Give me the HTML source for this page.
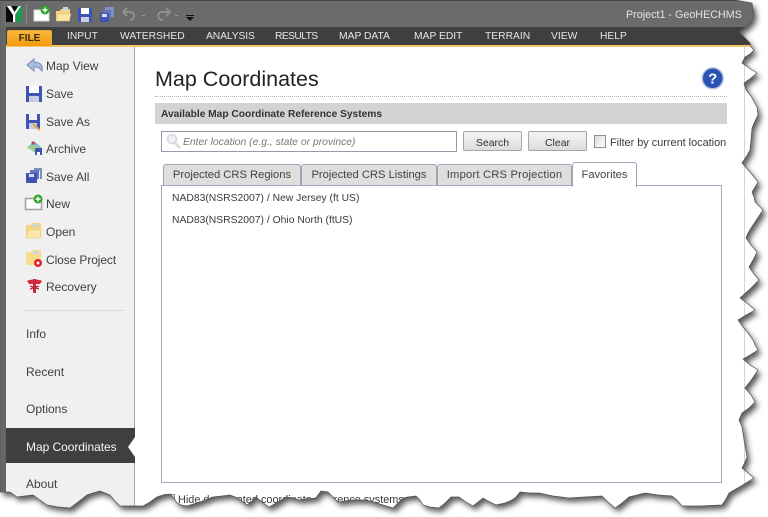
<!DOCTYPE html>
<html><head><meta charset="utf-8">
<style>
html,body{margin:0;padding:0;width:768px;height:517px;overflow:hidden;background:#fff}
*{box-sizing:border-box}
body{font-family:"Liberation Sans",sans-serif;font-size:11.5px;color:#3a3a3a;position:relative}
.t{position:absolute;white-space:nowrap;line-height:14px}
.b{position:absolute}
svg{position:absolute;overflow:visible}
#page{position:absolute;left:0;top:0;width:768px;height:517px;background:#fff;clip-path:url(#cp)}
.m{color:#e6e6e6;top:30px;font-size:10.3px}
.s{left:46px;font-size:12px;color:#404040}
.tab{position:absolute;top:164px;height:21px;background:#dedede;border:1.5px solid #a5a2b8;border-bottom:none;border-radius:3px 3px 0 0;text-align:center;line-height:20px;font-size:11.2px;color:#444;white-space:nowrap}
.btn{position:absolute;top:131px;width:59px;height:20px;border:1px solid #a5a5a5;border-radius:2px;background:linear-gradient(#f5f5f5,#dcdcdc);text-align:center;line-height:21px;font-size:10.5px;color:#333}
</style></head><body>
<svg width="768" height="517" style="left:0;top:0">
<defs>
<filter id="bl" x="-5%" y="-5%" width="110%" height="110%"><feGaussianBlur stdDeviation="3"/></filter>
<clipPath id="cp"><path id="edge" d="M0 0L735 0L752 3L753 9L754 15L752 20L749 24L744 28L739 32L744 37L750 43L751 47L754 50L750 54L745 57L742 63L749 68L757 73L751 78L744 83L746 90L751 96L754 102L757 107L758 115L755 121L752 128L751 140L750 150L746 157L742 163L750 172L758 182L755 187L752 192L754 197L755 202L759 206L763 210L757 219L751 228L748 233L746 238L751 245L757 252L753 260L749 267L754 274L759 280L750 289L740 298L748 304L755 310L746 315L738 320L743 327L748 333L753 340L755 345L758 350L750 355L743 359L750 365L758 370L752 379L745 388L751 395L755 402L749 408L742 413L739 420L742 427L744 440L747 457L745 462L742 468L748 473L754 478L741 486L729 493L726 499L722 505L700 506L682 506L677 500L672 496L658 495L645 493L637 495L629 497L622 503L615 508L608 502L602 496L585 497L569 498L553 496L539 493L530 493L520 492L516 497L512 500L505 503L496 505L490 502L483 498L478 502L473 506L466 502L459 497L451 497L445 503L439 508L430 507L423 505L420 500L416 496L408 497L403 498L398 503L393 508L380 504L366 500L352 500L338 502L333 497L328 492L321 491L318 495L316 498L306 499L299 500L292 498L286 497L278 502L269 507L262 502L256 497L252 501L247 505L238 498L230 495L222 496L213 497L200 502L187 506L181 505L177 503L174 498L170 494L163 495L157 497L150 502L143 506L130 506L120 506L115 501L110 495L105 493L100 491L93 493L87 495L78 502L70 508L58 507L47 505L40 500L33 495L25 496L17 497L13 494L10 492L0 492Z"/></clipPath>
</defs>
<use href="#edge" fill="#2a2a2a" opacity=".78" filter="url(#bl)" transform="translate(3,4)"/>
</svg>
<div id="page">
 <!-- chrome -->
 <div class="b" style="left:0;top:0;width:768px;height:27px;background:#6b6b6b;border-top:1px solid #3d3d3d"></div>
 <div class="b" style="left:0;top:27px;width:768px;height:18px;background:#3f3f3f"></div>
 <div class="b" style="left:0;top:45px;width:768px;height:2px;background:#f3c669"></div>
 <div class="b" style="left:0;top:27px;width:6px;height:490px;background:#666"></div>
 <div class="b" style="left:6px;top:47px;width:129px;height:470px;background:#f0f0f0;border-right:1.5px solid #a5a2b8"></div>
 <div class="b" style="left:744px;top:47px;width:1px;height:470px;background:#d4d4d4"></div>
 <!-- FILE tab -->
 <div class="b" style="left:7px;top:30px;width:45px;height:16px;background:linear-gradient(#f9b73a,#f39a0c);border-radius:2px 2px 0 0;border:1px solid #e9a93a;border-bottom:none;text-align:center;font-size:10px;font-weight:bold;line-height:15px;color:#3a2a10">FILE</div>
 <!-- menu -->
 <span class="t m" style="left:67px">INPUT</span>
 <span class="t m" style="left:120px">WATERSHED</span>
 <span class="t m" style="left:206px;letter-spacing:-.1px">ANALYSIS</span>
 <span class="t m" style="left:275px;letter-spacing:-.6px">RESULTS</span>
 <span class="t m" style="left:339px">MAP DATA</span>
 <span class="t m" style="left:414px">MAP EDIT</span>
 <span class="t m" style="left:485px">TERRAIN</span>
 <span class="t m" style="left:551px">VIEW</span>
 <span class="t m" style="left:600px">HELP</span>
 <span class="t" style="left:626px;top:8px;font-size:10.75px;color:#e2e2e2">Project1 - GeoHECHMS</span>
 <!-- quick access -->
 <svg width="768" height="27" style="left:0;top:0">
  <rect x="6" y="6" width="16" height="16" fill="#0a0a0a"/>
  <path d="M6 6L10 6L14 13L18 6L22 6L22 22L16 22L16 15Z" fill="#1c9a4d"/>
  <path d="M7 6L11 6L14.5 12L19 6L21 6L15.5 14L15.5 22L13 22L13 15Z" fill="#fff"/>
  <rect x="26" y="5" width="1" height="18" fill="#8a8a8a"/>
  <rect x="34" y="10" width="15" height="11" fill="#fff" stroke="#d8d8d8"/>
  <circle cx="45" cy="10" r="4.5" fill="#2aa52a"/><path d="M42.5 10h5M45 7.5v5" stroke="#fff" stroke-width="1.4"/>
  <path d="M56 21V11h4l1-2h9v12Z" fill="#f3d684"/><path d="M56 21l2-7h13l-2 7Z" fill="#fbe8a8" stroke="#d9b85a" stroke-width=".6"/>
  <rect x="63" y="7" width="5" height="3" fill="#bcd7ea"/>
  <path d="M78 8h14v14H78Z" fill="#3d55b4"/><rect x="81" y="8" width="8" height="6" fill="#fff"/><rect x="81" y="17" width="8" height="5" fill="#c9cfe0"/>
  <path d="M105 7h9v10h-3v-7h-6Z" fill="#7f8fc4"/><path d="M103 10h8v8h-8Z" fill="#6176bd"/><path d="M100 13h9v9h-9Z" fill="#3d55b4"/><rect x="102" y="14" width="5" height="3" fill="#dde"/>
  <path d="M130 20c5 0 6-8 0-8h-7M127 8l-4 4 4 4" fill="none" stroke="#8f8f8f" stroke-width="2"/>
  <path d="M163 20c-6 0-7-8 0-8h6M166 8l4 4-4 4" fill="none" stroke="#8f8f8f" stroke-width="2"/>
  <rect x="142" y="15" width="3" height="1" fill="#9a9a9a"/><rect x="175" y="15" width="3" height="1" fill="#9a9a9a"/>
  <rect x="186" y="15" width="8" height="1" fill="#111"/><path d="M186 17h8l-4 4Z" fill="#111"/>
 </svg>
 <!-- sidebar icons -->
 <svg width="135" height="300" style="left:0;top:0">
  <path d="M27 65l7-6v3c6 0 9 3 8 9-2-3-4-4-8-4v4Z" fill="#a8bcdc" stroke="#7b8fb8"/>
  <path d="M26 86h16v16H26Z" fill="#3d55b4"/><rect x="29" y="86" width="10" height="7" fill="#fff"/><rect x="29" y="96" width="10" height="6" fill="#c9cfe0"/>
  <path d="M26 114h14v15H26Z" fill="#3d55b4"/><rect x="29" y="114" width="8" height="6" fill="#f1f1f1"/><rect x="29" y="123" width="8" height="6" fill="#c9cfe0"/><path d="M33 124l7 6" stroke="#d9a13a" stroke-width="2"/>
  <path d="M27 148l7-7 8 7-8 3Z" fill="#7fb4e0"/><path d="M26 147l8-2 8 3-8 4Z" fill="#9fd08a"/><circle cx="33" cy="143" r="1.5" fill="#d33"/><rect x="35" y="148" width="7" height="7" fill="#3d55b4"/><rect x="37" y="152" width="3" height="3" fill="#fff"/>
  <path d="M34 168h8v11h-2v-8h-6Z" fill="#7f8fc4"/><path d="M30 170h9v9h-9Z" fill="#6176bd"/><path d="M26 173h11v10H26Z" fill="#3d55b4"/><rect x="29" y="174" width="5" height="3" fill="#dde"/>
  <rect x="25.500" y="198.500" width="16" height="11" fill="#fff" stroke="#a0a0a0" stroke-width="1.500"/>
  <circle cx="38" cy="199" r="4.500" fill="#2aa52a"/><path d="M35.500 199h5M38 196.500v5" stroke="#fff" stroke-width="1.400"/>
  <path d="M26 238v-13h5l1-2h9v15Z" fill="#f3d684"/><path d="M26 238l2-8h13l-1 8Z" fill="#fbe8a8" stroke="#e3c56d" stroke-width=".6"/><rect x="33" y="224" width="5" height="3" fill="#bcd7ea"/>
  <path d="M26 265v-13h5l1-2h9v15Z" fill="#f6dc8c"/><rect x="33" y="251" width="5" height="3" fill="#bcd7ea"/>
  <circle cx="38" cy="263" r="4" fill="#e61f2d"/><circle cx="38" cy="263" r="1.500" fill="#fff"/>
  <path d="M27 281c3-2 12-2 15 0l-2 3h-11Z" fill="#d42a3c"/><path d="M33 279h3v14h-3Z" fill="#c8283a"/><path d="M30 286l9 3M39 286l-9 3" stroke="#b8283a" stroke-width="1.400"/>
 </svg>
 <span class="t s" style="top:59px">Map View</span>
 <span class="t s" style="top:87px">Save</span>
 <span class="t s" style="top:115px">Save As</span>
 <span class="t s" style="top:142px">Archive</span>
 <span class="t s" style="top:170px">Save All</span>
 <span class="t s" style="top:197px">New</span>
 <span class="t s" style="top:225px">Open</span>
 <span class="t s" style="top:253px;letter-spacing:-.1px">Close Project</span>
 <span class="t s" style="top:280px">Recovery</span>
 <div class="b" style="left:24px;top:310px;width:101px;height:1px;background:#dcdcdc"></div>
 <span class="t s" style="left:26px;top:327px">Info</span>
 <span class="t s" style="left:26px;top:365px">Recent</span>
 <span class="t s" style="left:26px;top:402px">Options</span>
 <div class="b" style="left:6px;top:428px;width:129px;height:35px;background:#3f3f3f"></div>
 <svg width="10" height="20" style="left:127px;top:437px"><path d="M8 0L1 10L8 20Z" fill="#fff"/></svg>
 <span class="t s" style="left:26px;top:440px;color:#f4f4f4;letter-spacing:-.05px">Map Coordinates</span>
 <span class="t s" style="left:26px;top:477px">About</span>
 <!-- main -->
 <span class="t" style="left:155px;top:66px;font-size:21.5px;line-height:27px;color:#222">Map Coordinates</span>
 <svg width="26" height="26" style="left:700px;top:65px">
  <circle cx="12.700" cy="13.300" r="10.500" fill="#2a53b4" stroke="#b9c3dc" stroke-width="1.500"/>
  <text x="12.700" y="18.500" font-family="Liberation Sans" font-size="15" font-weight="bold" fill="#fff" text-anchor="middle">?</text>
 </svg>
 <div class="b" style="left:155px;top:96px;width:572px;height:0;border-top:1px dotted #b4b4b4"></div>
 <div class="b" style="left:155px;top:103px;width:572px;height:21px;background:#d3d3d3"></div>
 <span class="t" style="left:161px;top:108px;font-size:10.2px;font-weight:bold;color:#333">Available Map Coordinate Reference Systems</span>
 <div class="b" style="left:161px;top:131px;width:296px;height:21px;border:1px solid #9a97ad;background:#fff"></div>
 <svg width="20" height="20" style="left:164px;top:132px"><circle cx="8" cy="7" r="4.500" fill="#eef2f6" stroke="#d3d7dc" stroke-width="1.500"/><path d="M11 11l5 5" stroke="#d8d8d8" stroke-width="2.500"/></svg>
 <span class="t" style="left:183px;top:136px;font-size:10.35px;font-style:italic;color:#777">Enter location (e.g., state or province)</span>
 <div class="btn" style="left:463px;line-height:22px">Search</div>
 <div class="btn" style="left:528px;line-height:22px">Clear</div>
 <div class="b" style="left:594px;top:135px;width:12px;height:13px;border:1px solid #8f8f8f;background:linear-gradient(135deg,#dcdcdc,#fff)"></div>
 <span class="t" style="left:610px;top:136px;font-size:10.9px;color:#3a3a3a">Filter by current location</span>
 <!-- tabs -->
 <div class="b" style="left:161px;top:185px;width:561px;height:298px;border:1.500px solid #a9a6bd;background:#fff"></div>
 <div class="tab" style="left:163px;width:138px">Projected CRS Regions</div>
 <div class="tab" style="left:301px;width:136px">Projected CRS Listings</div>
 <div class="tab" style="left:437px;width:135px;letter-spacing:.2px">Import CRS Projection</div>
 <div class="tab" style="left:572px;top:162px;width:65px;height:24.500px;background:#fff;line-height:25px">Favorites</div>
 <span class="t" style="left:172px;top:192px;font-size:10.35px">NAD83(NSRS2007) / New Jersey (ft US)</span>
 <span class="t" style="left:172px;top:214px;font-size:10.35px">NAD83(NSRS2007) / Ohio North (ftUS)</span>
 <!-- bottom, mostly torn away -->
 <div class="b" style="left:164px;top:494px;width:11px;height:12px;border:1px solid #8f8f8f;background:#eee"></div>
 <span class="t" style="left:178px;top:493px;font-size:10.9px">Hide deprecated coordinate reference systems</span>
</div>
<svg width="768" height="517" style="left:0;top:0"><use href="#edge" fill="none" stroke="#555" stroke-width=".7"/></svg>
</body></html>
